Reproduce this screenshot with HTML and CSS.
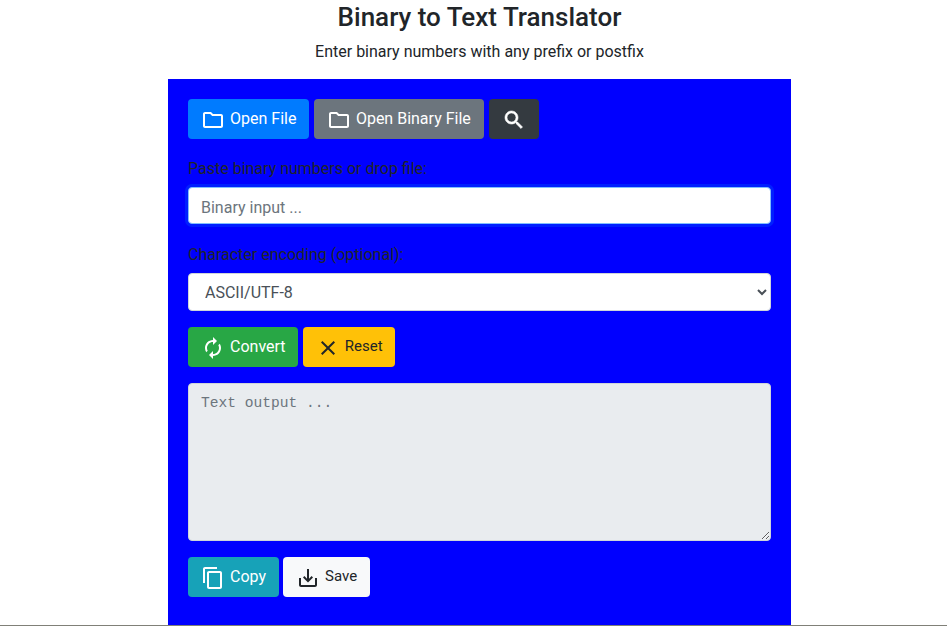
FILE: index.html
```html
<!DOCTYPE html>
<html lang="en">
<head>
  <meta charset="UTF-8">
  <title>Binary to Text Translator</title>
  <link rel="stylesheet" href="styles.css">
</head>
<body>

  <h1 class="page-title">Binary to Text Translator</h1>
  <p class="page-intro">Enter binary numbers with any prefix or postfix</p>

  <!-- CONVERTER BOX -->
  <form id="converter">
    <div class="btn-row">
      <button type="button" class="btn btn-blue">
        <svg class="icon" viewBox="0 0 24 24"><path d="M9.17 6l2 2H20v10H4V6h5.17M10 4H4c-1.1 0-1.99.9-1.99 2L2 18c0 1.1.9 2 2 2h16c1.1 0 2-.9 2-2V8c0-1.1-.9-2-2-2h-8l-2-2z"/></svg>
        <span class="btn-text">Open File</span>
      </button>
      <button type="button" class="btn btn-grey">
        <svg class="icon" viewBox="0 0 24 24"><path d="M9.17 6l2 2H20v10H4V6h5.17M10 4H4c-1.1 0-1.99.9-1.99 2L2 18c0 1.1.9 2 2 2h16c1.1 0 2-.9 2-2V8c0-1.1-.9-2-2-2h-8l-2-2z"/></svg>
        <span class="btn-text">Open Binary File</span>
      </button>
      <button type="button" class="btn btn-dark btn-search" aria-label="Search">
        <svg class="icon icon-bold" viewBox="0 0 24 24"><path d="M15.5 14h-.79l-.28-.27C15.41 12.59 16 11.11 16 9.5 16 5.91 13.09 3 9.5 3S3 5.91 3 9.5 5.91 16 9.5 16c1.61 0 3.09-.59 4.23-1.57l.27.28v.79l5 4.99L20.49 19l-4.99-5zm-6 0C7.01 14 5 11.99 5 9.5S7.01 5 9.5 5 14 7.01 14 9.5 11.99 14 9.5 14z"/></svg>
      </button>
    </div>

    <label class="field-label" for="binary-input">Paste binary numbers or drop file:</label>
    <input type="text" id="binary-input" class="field field-focus" placeholder="Binary input ...">

    <label class="field-label label-second" for="encoding">Character encoding (optional):</label>
    <select id="encoding" class="field field-select">
      <option>ASCII/UTF-8</option>
    </select>

    <div class="btn-row">
      <button type="button" class="btn btn-green">
        <svg class="icon" viewBox="0 0 24 24"><path d="M12 6v3l4-4-4-4v3c-4.42 0-8 3.58-8 8 0 1.57.46 3.03 1.24 4.26L6.7 14.8c-.45-.83-.7-1.79-.7-2.8 0-3.31 2.69-6 6-6zm6.76 1.74L17.3 9.2c.44.84.7 1.79.7 2.8 0 3.31-2.69 6-6 6v-3l-4 4 4 4v-3c4.42 0 8-3.58 8-8 0-1.57-.46-3.03-1.24-4.26z"/></svg>
        <span class="btn-text">Convert</span>
      </button>
      <button type="button" class="btn btn-yellow">
        <svg class="icon" viewBox="0 0 24 24"><path d="M19 6.41L17.59 5 12 10.59 6.41 5 5 6.41 10.59 12 5 17.59 6.41 19 12 13.41 17.59 19 19 17.59 13.41 12z"/></svg>
        <span class="btn-text btn-small">Reset</span>
      </button>
    </div>

    <textarea id="output" class="field output" placeholder="Text output ..." readonly></textarea>

    <div class="btn-row">
      <button type="button" class="btn btn-teal">
        <svg class="icon" viewBox="0 0 24 24"><path d="M16 1H4c-1.1 0-2 .9-2 2v14h2V3h12V1zm3 4H8c-1.1 0-2 .9-2 2v14c0 1.1.9 2 2 2h11c1.1 0 2-.9 2-2V7c0-1.1-.9-2-2-2zm0 16H8V7h11v14z"/></svg>
        <span class="btn-text">Copy</span>
      </button>
      <button type="button" class="btn btn-light">
        <svg class="icon" viewBox="0 0 24 24"><path d="M19 12v7H5v-7H3v7c0 1.1.9 2 2 2h14c1.1 0 2-.9 2-2v-7h-2zm-6 .67l2.59-2.58L17 11.5l-5 5-5-5 1.41-1.41L11 12.67V3h2z"/></svg>
        <span class="btn-text btn-small">Save</span>
      </button>
    </div>
  </form>

  <hr class="page-rule">

</body>
</html>
```

FILE: styles.css
```css
html, body {
  height: 626px;
  overflow: hidden;
}

body {
  box-sizing: border-box;
  margin: 0;
  padding-left: 12px;
  background: #fff;
  color: #212529;
  font-family: Roboto, "Noto Sans", sans-serif;
  font-size: 16px;
}

.page-title {
  margin: 0;
  padding-top: 1px;
  text-align: center;
  font-size: 26px;
  line-height: 32px;
  font-weight: 500;
}

.page-intro {
  margin: 8px 0 0;
  text-align: center;
  font-size: 16px;
  line-height: 22px;
}

#converter {
  box-sizing: border-box;
  width: 623px;
  height: 546px;
  margin: 16px auto 0;
  padding: 20px;
  background: #00f;
}

.btn-row {
  display: flex;
  gap: 4.5px;
}

.btn {
  display: flex;
  align-items: center;
  gap: 5px;
  height: 40px;
  padding: 0 12px;
  border: 1px solid transparent;
  border-radius: 4px;
  font-family: inherit;
  font-size: 16px;
  color: #fff;
}

.btn-blue { background: #007bff; }
.btn-grey { background: #6c757d; }
.btn-dark { background: #343a40; }
.btn-green { background: #28a745; padding-right: 11.7px; }
.btn-yellow { background: #ffc107; color: #212529; padding-right: 11px; }
.btn-teal { background: #17a2b8; padding-right: 11.5px; }
.btn-light { background: #f8f9fa; color: #212529; }

.btn-text {
  margin-bottom: 2px;
}

.btn-small {
  font-size: 15px;
}

.btn-search {
  width: 50px;
  margin-left: 1px;
  justify-content: center;
}

.icon {
  width: 24px;
  height: 24px;
  margin-top: 2px;
  fill: currentColor;
}

.icon-bold {
  stroke: currentColor;
  stroke-width: .6;
}

.field-label {
  display: block;
  margin-top: 19px;
  margin-bottom: 7px;
  font-size: 16px;
  line-height: 22px;
  color: #212529;
}

.label-second {
  margin-top: 20px;
}

.field {
  display: block;
  box-sizing: border-box;
  width: 100%;
  border: 1px solid #ced4da;
  border-radius: 4px;
  padding: 6px 12px;
  background: #fff;
  font-family: inherit;
  font-size: 16px;
  color: #495057;
}

.field::placeholder {
  color: #6c757d;
  opacity: 1;
}

.field-focus {
  height: 37px;
  padding: 8px 12px 4px;
  border-color: #80bdff;
  outline: 0;
  box-shadow: 0 0 0 3px rgba(0, 123, 255, .25);
}

.field-select {
  height: 38px;
  margin-bottom: 16px;
}

.output {
  height: 158px;
  margin: 16px 0;
  padding-top: 9px;
  background: #e9ecef;
  font-family: "Liberation Mono", monospace;
  font-size: 14.6px;
  line-height: 20px;
  resize: vertical;
}

.page-rule {
  margin: 0 0 0 -12px;
  border: 0;
  border-top: 1px solid #808078;
}
```
